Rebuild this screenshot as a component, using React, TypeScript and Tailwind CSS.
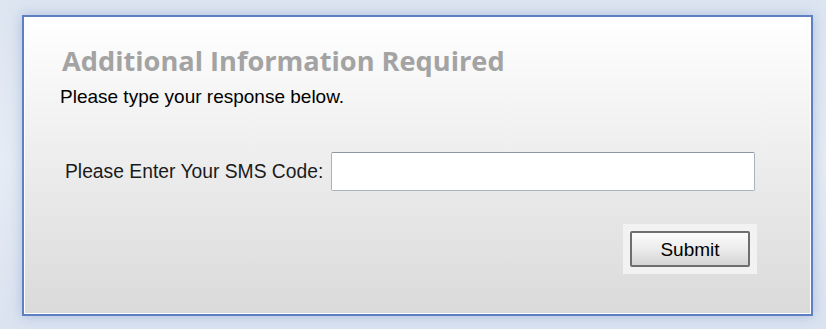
import React from 'react';

const App: React.FC = () => {
  return (
    <div className="w-[826px] h-[329px] bg-gradient-to-b from-[#dde5f1] via-[#e6ecf5] to-[#dbe3f0] pt-[15px] pl-[22px] font-['Liberation_Sans',Arial,sans-serif]">
      <div className="w-[791px] h-[301px] border-2 border-[#5d80c2] shadow-[0_0_12px_rgba(120,150,200,0.5)]">
        <div className="h-full border border-white bg-gradient-to-b from-[#ffffff] to-[#dadada] pl-[37px] pt-[29px]">
          <h1 className="text-[27.2px] font-bold text-[#a3a3a3] leading-none font-['Open_Sans',sans-serif]">
            Additional Information Required
          </h1>
          <p className="mt-[13px] -ml-[2px] text-[19px] text-black leading-none">Please type your response below.</p>

          <div className="mt-[46px] flex items-center pl-[3px]">
            <label className="text-[19.3px] text-[#1a1a1a] leading-none mr-[8px]">Please Enter Your SMS Code:</label>
            <input
              type="text"
              className="w-[424px] h-[39px] bg-white border border-[#a9b3bf] border-t-[#8c96a3] rounded-[2px] outline-none px-2"
            />
          </div>

          <div className="mt-[33px] flex justify-end pr-[53px]">
            <div className="w-[134px] h-[50px] bg-[#f2f2f2] flex items-center justify-center">
              <button className="w-[120px] h-[36px] border-2 border-[#6e6e6e] rounded-[2px] bg-gradient-to-b from-[#fbfbfb] via-[#ececec] to-[#d4d4d4] text-[19px] text-black leading-none">
                Submit
              </button>
            </div>
          </div>
        </div>
      </div>
    </div>
  );
};

export default App;
